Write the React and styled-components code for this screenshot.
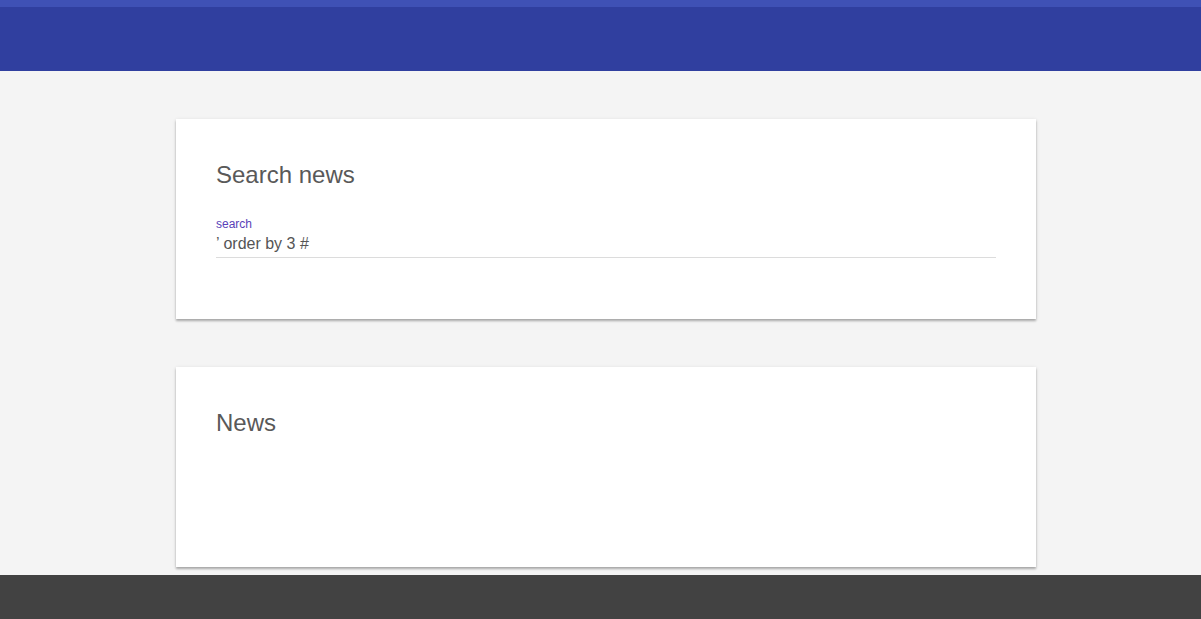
import React from "react";
import styled, { createGlobalStyle } from "styled-components";

const Global = createGlobalStyle`
  html, body { margin: 0; padding: 0; }
  body {
    background: #f4f4f4;
    font-family: "Liberation Sans", Arial, sans-serif;
    color: #555;
  }
`;

const StatusBar = styled.div`
  height: 7px;
  background: #3f51b5;
`;

const Header = styled.header`
  height: 64px;
  background: #303f9f;
`;

const Main = styled.main`
  display: flex;
  flex-direction: column;
  align-items: center;
  gap: 48px;
  padding: 48px 0 8px 11px;
`;

const Card = styled.section`
  box-sizing: border-box;
  width: 860px;
  height: 200px;
  background: #fff;
  padding: 40px;
  box-shadow: 0 2px 2px rgba(0, 0, 0, 0.25), 0 1px 4px rgba(0, 0, 0, 0.12);
`;

const Title = styled.h2`
  margin: 0;
  font-size: 24px;
  font-weight: 400;
  line-height: 32px;
  color: #595959;
`;

const Field = styled.label`
  display: flex;
  flex-direction: column;
  margin-top: 26px;
  border-bottom: 1px solid #dcdcdc;
`;

const Label = styled.span`
  font-size: 12px;
  line-height: 14px;
  margin-bottom: 3px;
  color: #5a3fb8;
`;

const Input = styled.input`
  border: none;
  outline: none;
  padding: 0;
  margin: 0 0 3px;
  height: 20px;
  font-family: "Liberation Sans", Arial, sans-serif;
  font-size: 16px;
  color: #555;
  background: transparent;
`;

const Footer = styled.footer`
  height: 60px;
  background: #424242;
`;

export default function App() {
  return (
    <>
      <Global />
      <StatusBar />
      <Header />
      <Main>
        <Card>
          <Title>Search news</Title>
          <Field>
            <Label>search</Label>
            <Input defaultValue="’ order by 3 #" />
          </Field>
        </Card>
        <Card>
          <Title>News</Title>
        </Card>
      </Main>
      <Footer />
    </>
  );
}
